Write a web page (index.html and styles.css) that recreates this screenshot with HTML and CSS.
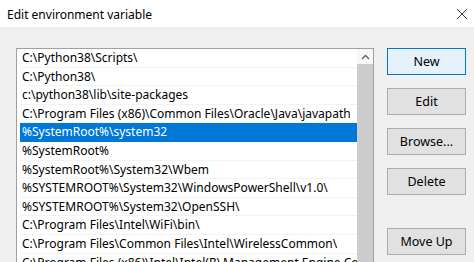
FILE: index.html
```html
<!DOCTYPE html>
<html>
<head>
  <title>Edit environment variable</title>
  <link rel="stylesheet" href="styles.css">
</head>
<body>
  <div class="titlebar">
    <span class="title">Edit environment variable</span>
    <svg class="close" width="12" height="12" viewBox="0 0 12 12">
      <path d="M1 1 L11 11 M11 1 L1 11" stroke="#3c3c3c" stroke-width="1" fill="none"/>
    </svg>
  </div>

  <div class="content">
    <div class="listbox">
      <ul class="rows">
        <li>C:\Python38\Scripts\</li>
        <li>C:\Python38\</li>
        <li>c:\python38\lib\site-packages</li>
        <li>C:\Program Files (x86)\Common Files\Oracle\Java\javapath</li>
        <li class="selected">%SystemRoot%\system32</li>
        <li>%SystemRoot%</li>
        <li>%SystemRoot%\System32\Wbem</li>
        <li>%SYSTEMROOT%\System32\WindowsPowerShell\v1.0\</li>
        <li>%SYSTEMROOT%\System32\OpenSSH\</li>
        <li>C:\Program Files\Intel\WiFi\bin\</li>
        <li>C:\Program Files\Common Files\Intel\WirelessCommon\</li>
        <li>C:\Program Files (x86)\Intel\Intel(R) Management Engine Components\DAL</li>
      </ul>
      <div class="scrollbar">
        <div class="arrow">
          <svg width="9" height="6" viewBox="0 0 9 6">
            <path d="M1 5 L4.5 1.5 L8 5" stroke="#606060" stroke-width="1.3" fill="none"/>
          </svg>
        </div>
        <div class="thumb"></div>
      </div>
    </div>

    <div class="buttons">
      <button class="btn default">New</button>
      <button class="btn">Edit</button>
      <button class="btn">Browse...</button>
      <button class="btn">Delete</button>
      <button class="btn spaced">Move Up</button>
    </div>
  </div>
</body>
</html>
```

FILE: styles.css
```css
body {
  margin: 0;
  height: 262px;
  overflow: hidden;
  background-color: #f0f0f0;
  font-family: "Noto Sans", "Open Sans", sans-serif;
  font-size: 12px;
  color: #000;
}

.titlebar {
  height: 27px;
  background-color: #fff;
  display: flex;
  align-items: center;
  justify-content: space-between;
  padding: 0 6px 0 7px;
}

.title {
  font-size: 12px;
  margin-top: 2px;
}

.close {
  margin-top: 1px;
}

.content {
  display: flex;
  align-items: flex-start;
  padding: 21px 0 0 16px;
  gap: 13px;
}

.listbox {
  width: 356px;
  height: 260px;
  background-color: #fff;
  border: 1px solid #a0a0a0;
  display: flex;
}

.rows {
  list-style: none;
  margin: 0;
  padding: 0 0 0 3px;
  flex: 1;
  min-width: 0;
}

.rows li {
  height: 18.6px;
  line-height: 18.6px;
  padding-left: 2px;
  white-space: nowrap;
  overflow: hidden;
  border-bottom: 1px solid #f3f3f3;
  box-sizing: border-box;
}

.rows li.selected {
  background-color: #0078d7;
  color: #fff;
  border-bottom-color: #0078d7;
}

.scrollbar {
  width: 16px;
  display: flex;
  flex-direction: column;
}

.arrow {
  height: 15px;
  background-color: #f7f7f7;
  display: flex;
  align-items: center;
  justify-content: center;
}

.thumb {
  flex: 1;
  background-color: #cdcdcd;
}

.buttons {
  display: flex;
  flex-direction: column;
  gap: 13px;
}

.btn {
  width: 79px;
  height: 27px;
  padding: 0;
  font-family: inherit;
  font-size: 12.5px;
  color: #000;
  background-color: #e1e1e1;
  border: 1px solid #adadad;
  border-radius: 0;
}

.btn.default {
  background-color: #e5f1fb;
  border-color: #0078d7;
}

.btn.spaced {
  margin-top: 20px;
}
```
